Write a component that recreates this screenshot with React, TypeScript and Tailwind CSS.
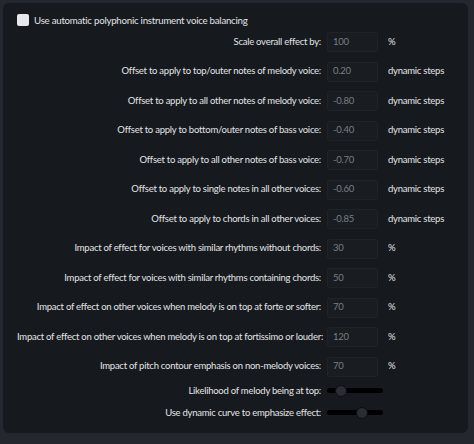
const rows = [
  { label: "Scale overall effect by:", value: "100", unit: "%" },
  { label: "Offset to apply to top/outer notes of melody voice:", value: "0.20", unit: "dynamic steps" },
  { label: "Offset to apply to all other notes of melody voice:", value: "-0.80", unit: "dynamic steps" },
  { label: "Offset to apply to bottom/outer notes of bass voice:", value: "-0.40", unit: "dynamic steps" },
  { label: "Offset to apply to all other notes of bass voice:", value: "-0.70", unit: "dynamic steps" },
  { label: "Offset to apply to single notes in all other voices:", value: "-0.60", unit: "dynamic steps" },
  { label: "Offset to apply to chords in all other voices:", value: "-0.85", unit: "dynamic steps" },
  { label: "Impact of effect for voices with similar rhythms without chords:", value: "30", unit: "%" },
  { label: "Impact of effect for voices with similar rhythms containing chords:", value: "50", unit: "%" },
  { label: "Impact of effect on other voices when melody is on top at forte or softer:", value: "70", unit: "%" },
  { label: "Impact of effect on other voices when melody is on top at fortissimo or louder:", value: "120", unit: "%" },
  { label: "Impact of pitch contour emphasis on non-melody voices:", value: "70", unit: "%" },
];

const sliders = [
  { label: "Likelihood of melody being at top:", pos: 14 },
  { label: "Use dynamic curve to emphasize effect:", pos: 35 },
];

const Slider = ({ pos }: { pos: number }) => (
  <div className="relative h-[12px] w-[56px] flex items-center">
    <div className="h-[5px] w-full rounded-full bg-black" />
    <div
      className="absolute top-0 h-[12px] w-[12px] -translate-x-1/2 rounded-full border border-[#0c0d10] bg-[#2a2d33]"
      style={{ left: pos }}
    />
  </div>
);

export default function App() {
  return (
    <div
      className="h-[444px] w-[474px] overflow-hidden bg-[#24282e] pt-[3px] pl-[3px] text-[9.5px] tracking-[-0.25px] text-[#e3e4e6] whitespace-nowrap"
      style={{ fontFamily: 'Lato, "Noto Sans", sans-serif' }}
    >
      <div className="h-[430px] w-[465px] rounded-md bg-[#16191e] pl-[14px] pt-[11px]">
        <label className="flex items-center gap-[5px] h-[12px] text-[9.7px]">
          <span className="h-[12px] w-[12px] rounded-[2px] bg-[#e6e8ee]" />
          <span>Use automatic polyphonic instrument voice balancing</span>
        </label>

        <div className="mt-[6px] grid grid-cols-[304px_51px_auto] gap-x-[6px] gap-y-[9.5px] items-center">
          {rows.map((r) => (
            <div key={r.label} className="contents">
              <span className="text-right">{r.label}</span>
              <div className="h-[20px] rounded-[2px] border border-[#1f2328] bg-[#191c21] px-[5px] flex items-center text-[#7b7e84]">
                {r.value}
              </div>
              <span className="pl-[4px]">{r.unit}</span>
            </div>
          ))}
        </div>

        <div className="mt-[7px] grid grid-cols-[304px_auto] gap-x-[6px] gap-y-[8px] items-center">
          {sliders.map((s) => (
            <div key={s.label} className="contents">
              <span className="text-right">{s.label}</span>
              <Slider pos={s.pos} />
            </div>
          ))}
        </div>
      </div>
    </div>
  );
}
